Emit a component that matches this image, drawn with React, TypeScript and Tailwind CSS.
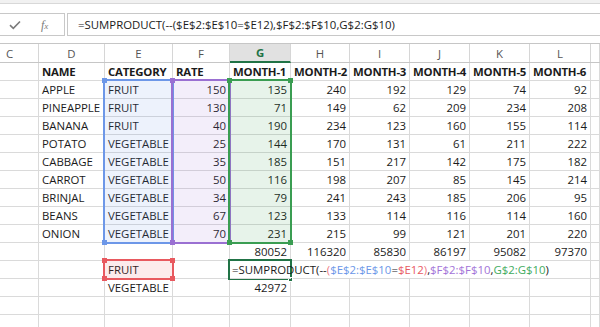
import React from "react";

const FONT = { fontFamily: "'Open Sans', 'Liberation Sans', sans-serif" };

const names = ["APPLE", "PINEAPPLE", "BANANA", "POTATO", "CABBAGE", "CARROT", "BRINJAL", "BEANS", "ONION"];
const cats = ["FRUIT", "FRUIT", "FRUIT", "VEGETABLE", "VEGETABLE", "VEGETABLE", "VEGETABLE", "VEGETABLE", "VEGETABLE"];
const rate = [150, 130, 40, 25, 35, 50, 34, 67, 70];
const months = [
  [135, 71, 190, 144, 185, 116, 79, 123, 231],
  [240, 149, 234, 170, 151, 198, 241, 133, 215],
  [192, 62, 123, 131, 217, 207, 243, 114, 99],
  [129, 209, 160, 61, 142, 85, 185, 116, 121],
  [74, 234, 155, 211, 175, 145, 206, 114, 201],
  [92, 208, 114, 222, 182, 214, 95, 160, 220],
];

const GRID = "grid grid-cols-[39px_66px_68px_57px_61px_59px_60px_60px_60px_61px_9px]";

type CellProps = { children?: React.ReactNode; right?: boolean; bold?: boolean; noBorder?: boolean };
function Cell({ children, right, bold, noBorder }: CellProps) {
  return (
    <div
      className={
        "h-[18px] flex items-center px-[3px] pt-[1px] whitespace-nowrap text-[11.4px] text-[#1b1b1b] border-b border-[#dadada] " +
        (noBorder ? "" : "border-r ") +
        (right ? "justify-end " : "justify-start ") +
        (bold ? "font-bold tracking-[-0.2px]" : "")
      }
    >
      {children}
    </div>
  );
}

function Handle({ x, y, color }: { x: number; y: number; color: string }) {
  return <div className="absolute w-[5px] h-[5px]" style={{ left: x - 2, top: y - 2, background: color }} />;
}

function RangeBox({ l, t, w, h, border, fill }: { l: number; t: number; w: number; h: number; border: string; fill: string }) {
  return (
    <>
      <div
        className="absolute border-2 pointer-events-none"
        style={{ left: l, top: t, width: w, height: h, borderColor: border, background: fill }}
      />
      <Handle x={l + 1} y={t + 1} color={border} />
      <Handle x={l + w - 2} y={t + 1} color={border} />
      <Handle x={l + 1} y={t + h - 2} color={border} />
      <Handle x={l + w - 2} y={t + h - 2} color={border} />
    </>
  );
}

function FormulaColored() {
  return (
    <>
      <span>=SUMPRODUCT(--</span>
      <span className="text-[#ef7a7f]">(</span>
      <span className="text-[#6b96e8]">$E$2:$E$10</span>
      <span>=</span>
      <span className="text-[#e8595f]">$E12</span>
      <span className="text-[#ef7a7f]">)</span>
      <span>,</span>
      <span className="text-[#a273d8]">$F$2:$F$10</span>
      <span>,</span>
      <span className="text-[#42ab5e]">G$2:G$10</span>
      <span>)</span>
    </>
  );
}

export default function App() {
  const headers = ["C", "D", "E", "F", "G", "H", "I", "J", "K", "L", ""];
  return (
    <div className="w-[600px] h-[327px] overflow-hidden bg-white" style={FONT}>
      {/* top strip */}
      <div className="h-[4px] bg-[#f1f1f1] border-b border-[#d8d8d8]" />
      {/* formula bar */}
      <div className="flex gap-[2px] mt-[9px] h-[23px]">
        <div className="w-[65px] border border-l-0 border-[#c8c8c8] flex items-center">
          <svg width="12" height="10" viewBox="0 0 12 10" className="ml-[9px]">
            <path d="M1 5.2 L4.3 8.3 L11 1.5" fill="none" stroke="#7b7b7b" strokeWidth="1.6" />
          </svg>
          <span className="ml-[20px] text-[#7b7b7b] italic text-[12px] leading-none" style={{ fontFamily: "'Liberation Serif', serif" }}>
            f<span className="text-[9px]">x</span>
          </span>
        </div>
        <div className="flex-1 border border-r-0 border-[#c8c8c8] flex items-center pl-[10px] pt-[1px] text-[11.4px] text-[#1b1b1b] whitespace-nowrap">
          =SUMPRODUCT(--($E$2:$E$10=$E12),$F$2:$F$10,G$2:G$10)
        </div>
      </div>
      {/* sheet */}
      <div className="relative mt-[7px]">
        {/* column headers */}
        <div className={GRID + " border-t border-b border-[#c6c6c6] h-[20px]"}>
          {headers.map((h, i) => (
            <div
              key={i}
              className={
                "flex items-center text-[11.4px] border-r border-[#d6d6d6] " +
                (i === 0 ? "justify-start pl-[6px] " : "justify-center ") +
                (h === "G" ? "bg-[#e1e1e1] text-[#217346] font-bold border-b-2 border-b-[#217346] -mb-[1px]" : "text-[#555]")
              }
            >
              {h}
            </div>
          ))}
        </div>
        {/* row 1 header labels */}
        <div className={GRID}>
          <Cell />
          <Cell bold>NAME</Cell>
          <Cell bold>CATEGORY</Cell>
          <Cell bold>RATE</Cell>
          <Cell bold>MONTH-1</Cell>
          <Cell bold>MONTH-2</Cell>
          <Cell bold>MONTH-3</Cell>
          <Cell bold>MONTH-4</Cell>
          <Cell bold>MONTH-5</Cell>
          <Cell bold>MONTH-6</Cell>
          <Cell />
        </div>
        {names.map((n, r) => (
          <div key={n} className={GRID}>
            <Cell />
            <Cell>{n}</Cell>
            <Cell>{cats[r]}</Cell>
            <Cell right>{rate[r]}</Cell>
            {months.map((m, k) => (
              <Cell key={k} right>
                {m[r]}
              </Cell>
            ))}
            <Cell />
          </div>
        ))}
        {/* totals */}
        <div className={GRID}>
          <Cell />
          <Cell />
          <Cell />
          <Cell />
          <Cell right>80052</Cell>
          <Cell right>116320</Cell>
          <Cell right>85830</Cell>
          <Cell right>86197</Cell>
          <Cell right>95082</Cell>
          <Cell right>97370</Cell>
          <Cell />
        </div>
        {/* row 12 */}
        <div className={GRID}>
          <Cell />
          <Cell />
          <Cell>FRUIT</Cell>
          <Cell />
          <div className="relative z-20 h-[18px] flex items-center px-[2px] pt-[1px] whitespace-nowrap text-[11.4px] text-[#1b1b1b] border-b border-[#dadada] overflow-visible">
            <FormulaColored />
            <span className="inline-block w-[2px] h-[15px] bg-[#333] ml-[1px]" />
          </div>
          <Cell noBorder />
          <Cell noBorder />
          <Cell noBorder />
          <Cell noBorder />
          <Cell />
          <Cell />
        </div>
        {/* row 13 */}
        <div className={GRID}>
          <Cell />
          <Cell />
          <Cell>VEGETABLE</Cell>
          <Cell />
          <Cell right>42972</Cell>
          <Cell />
          <Cell />
          <Cell />
          <Cell />
          <Cell />
          <Cell />
        </div>
        {[0, 1].map((k) => (
          <div key={k} className={GRID}>
            {headers.map((_, i) => (
              <Cell key={i} />
            ))}
          </div>
        ))}

        {/* overlays (range highlights over the grid) */}
        <div className="absolute inset-0 z-10 pointer-events-none">
          <RangeBox l={103} t={36} w={71} h={165} border="#6d97e8" fill="rgba(109,151,232,0.12)" />
          <RangeBox l={171} t={36} w={60} h={165} border="#9a70d2" fill="rgba(154,112,210,0.12)" />
          <RangeBox l={228} t={36} w={64} h={165} border="#3a9d52" fill="rgba(58,157,82,0.12)" />
          <RangeBox l={103} t={216} w={71} h={21} border="#e8595f" fill="rgba(232,89,95,0.12)" />
          <div className="absolute border-2 border-[#217346]" style={{ left: 228, top: 216, width: 64, height: 21 }} />
          <div className="absolute w-[5px] h-[5px] bg-[#217346] border border-white" style={{ left: 288, top: 234 }} />
        </div>
      </div>
    </div>
  );
}
